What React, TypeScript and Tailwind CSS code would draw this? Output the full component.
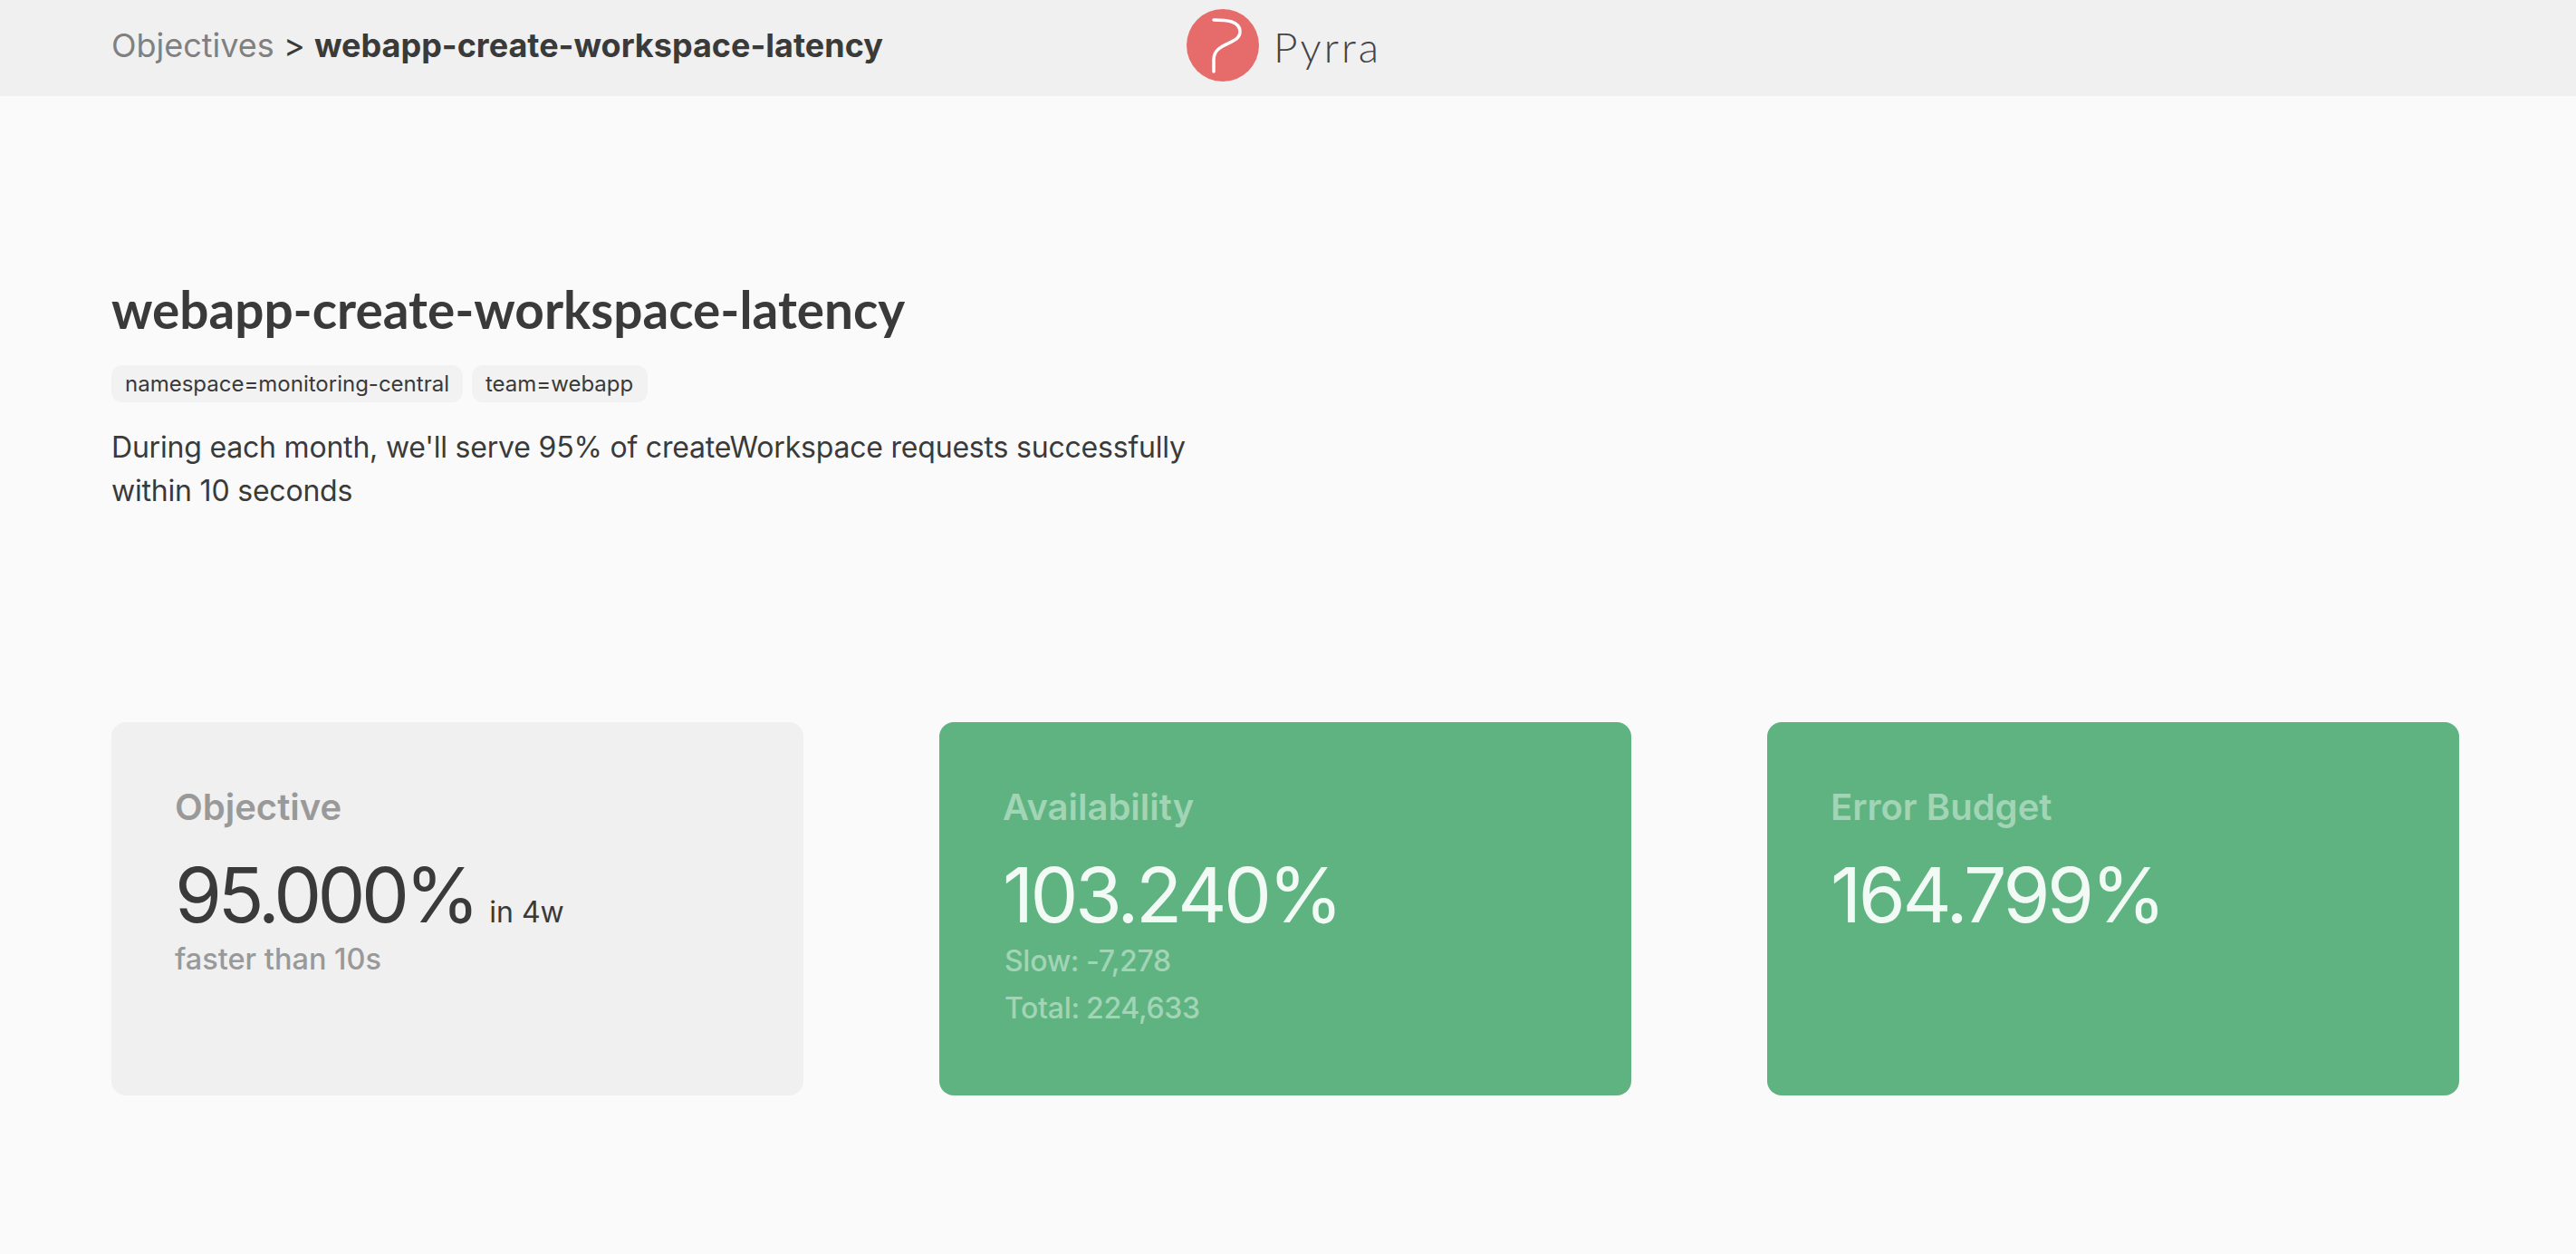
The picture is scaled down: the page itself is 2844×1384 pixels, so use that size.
import React from "react";

function Card({ title, green, children }: { title: string; green?: boolean; children: React.ReactNode }) {
  return (
    <div className={`w-[764px] h-[412px] rounded-[16px] pl-[70px] pt-[70px] ${green ? "bg-[#5fb381] text-[#f2faf5]" : "bg-[#f0f0f0] text-[#3a3a3a]"}`}>
      <div className={`text-[40px] leading-[48px] font-semibold ${green ? "text-[#a1d5b6]" : "text-[#999999]"}`}>{title}</div>
      {children}
    </div>
  );
}

export default function App() {
  return (
    <div className="min-h-[1384px] bg-[#fafafa] font-['Inter',sans-serif] text-[#3a3a3a]">
      <header className="h-[106px] bg-[#f0f0f0] flex items-center pl-[123px]">
        <div className="w-[1187px] text-[36px] leading-[44px] mt-[-6px]">
          <span className="text-[#808080]">Objectives</span>
          <span> &gt; </span>
          <span className="font-bold">webapp-create-workspace-latency</span>
        </div>
        <div className="flex items-center mt-[-6px]">
          <svg width="80" height="80" viewBox="0 0 80 80">
            <circle cx="40" cy="40" r="40" fill="#e56c6a" />
            <path d="M30 12 C44 12 59 13 59 25 C59 40 30 36 30 56 L30 69" fill="none" stroke="#ffffff" strokeWidth="3.5" strokeLinecap="round" />
          </svg>
          <span className="ml-[16px] mt-[3px] font-['Lato',sans-serif] font-light text-[46px] leading-[60px] tracking-[3px] text-[#444444]">Pyrra</span>
        </div>
      </header>
      <main className="pl-[123px] pt-[195px]">
        <h1 className="font-['Lato',sans-serif] font-bold text-[56.7px] leading-[80px]">webapp-create-workspace-latency</h1>
        <div className="flex gap-[10px] mt-[22px]">
          <span className="h-[41px] px-[15px] rounded-[12px] bg-[#f2f2f2] text-[24px] leading-[41px]">namespace=monitoring-central</span>
          <span className="h-[41px] pl-[15px] pr-[16px] rounded-[12px] bg-[#f2f2f2] text-[24px] leading-[41px]">team=webapp</span>
        </div>
        <p className="mt-[26px] w-[1240px] text-[32px] leading-[48px] tracking-[-0.2px]">During each month, we'll serve 95% of createWorkspace requests successfully within 10 seconds</p>
        <div className="flex gap-[150px] mt-[231px]">
          <Card title="Objective">
            <div className="mt-[23px] text-[84px] leading-[100px] tracking-[-4.6px]">95.000%<span className="ml-[15px] text-[32px] tracking-normal">in 4w</span></div>
            <div className="mt-[-22px] text-[32.5px] leading-[48px] text-[#999999] font-medium">faster than 10s</div>
          </Card>
          <Card title="Availability" green>
            <div className="mt-[23px] text-[84px] leading-[100px] tracking-[-3.6px]">103.240%</div>
            <div className="mt-[-3px] ml-[2px] grid grid-cols-[90px_auto] justify-start text-[32px] leading-[52px] tracking-[-0.3px] text-[#a1d5b6] font-medium">
              <span>Slow:</span>
              <span>-7,278</span>
              <span>Total:</span>
              <span>224,633</span>
            </div>
          </Card>
          <Card title="Error Budget" green>
            <div className="mt-[23px] text-[84px] leading-[100px] tracking-[-3.4px]">164.799%</div>
          </Card>
        </div>
      </main>
    </div>
  );
}
